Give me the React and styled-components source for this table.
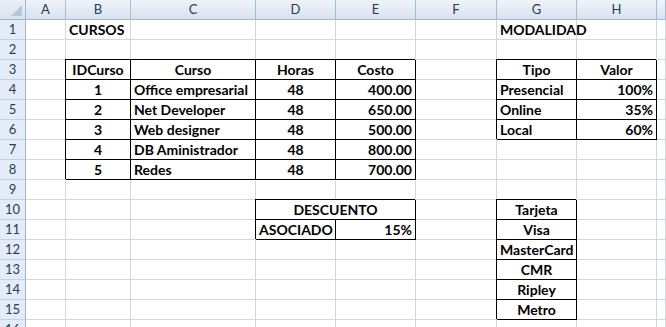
import React from "react";
import styled, { createGlobalStyle, css } from "styled-components";

const GlobalStyle = createGlobalStyle`
  html, body {
    margin: 0;
    padding: 0;
    background: #ffffff;
    overflow: hidden;
  }
  body {
    font-family: Lato, "Liberation Sans", sans-serif;
  }
`;

// column letters and widths (first entry is the row-number gutter)
const COLUMNS = ["A", "B", "C", "D", "E", "F", "G", "H", ""];
const WIDTHS = [26, 40, 65, 125, 80, 80, 81, 80, 80];
const ROW_COUNT = 16;

// sheet contents: key is the cell address
const CELLS = {
    B1: { v: "CURSOS" },
    G1: { v: "MODALIDAD" },

    B3: { v: "IDCurso", align: "center", box: true },
    C3: { v: "Curso", align: "center", box: true },
    D3: { v: "Horas", align: "center", box: true },
    E3: { v: "Costo", align: "center", box: true },
    G3: { v: "Tipo", align: "center", box: true },
    H3: { v: "Valor", align: "center", box: true },

    B4: { v: "1", align: "center", box: true },
    C4: { v: "Office empresarial", box: true },
    D4: { v: "48", align: "center", box: true },
    E4: { v: "400.00", align: "right", box: true },
    G4: { v: "Presencial", box: true },
    H4: { v: "100%", align: "right", box: true },

    B5: { v: "2", align: "center", box: true },
    C5: { v: "Net Developer", box: true },
    D5: { v: "48", align: "center", box: true },
    E5: { v: "650.00", align: "right", box: true },
    G5: { v: "Online", box: true },
    H5: { v: "35%", align: "right", box: true },

    B6: { v: "3", align: "center", box: true },
    C6: { v: "Web designer", box: true },
    D6: { v: "48", align: "center", box: true },
    E6: { v: "500.00", align: "right", box: true },
    G6: { v: "Local", box: true },
    H6: { v: "60%", align: "right", box: true },

    B7: { v: "4", align: "center", box: true },
    C7: { v: "DB Aministrador", box: true },
    D7: { v: "48", align: "center", box: true },
    E7: { v: "800.00", align: "right", box: true },

    B8: { v: "5", align: "center", box: true },
    C8: { v: "Redes", box: true },
    D8: { v: "48", align: "center", box: true },
    E8: { v: "700.00", align: "right", box: true },

    D10: { v: "DESCUENTO", align: "center", box: true, span: 2 },
    G10: { v: "Tarjeta", align: "center", box: true },

    D11: { v: "ASOCIADO", box: true },
    E11: { v: "15%", align: "right", box: true },
    G11: { v: "Visa", align: "center", box: true },

    G12: { v: "MasterCard", align: "center", box: true },
    G13: { v: "CMR", align: "center", box: true },
    G14: { v: "Ripley", align: "center", box: true },
    G15: { v: "Metro", align: "center", box: true },
};

const Sheet = styled.div`
    width: 666px;
    height: 327px;
    overflow: hidden;
    display: grid;
    grid-template-columns: ${WIDTHS.map((w) => `${w}px`).join(" ")} 1fr;
    grid-auto-rows: 20px;
    background: #ffffff;
`;

const headerText = css`
    font-family: Lato, "Liberation Sans", sans-serif;
    font-size: 13px;
    color: #283c55;
    line-height: 19px;
    text-align: center;
    box-sizing: border-box;
`;

const Corner = styled.div`
    position: relative;
    box-sizing: border-box;
    background: linear-gradient(#e9eff8, #d9e3f0);
    border-right: 1px solid #9eb6ce;
    border-bottom: 1px solid #9eb6ce;

    &::after {
        content: "";
        position: absolute;
        right: 3px;
        bottom: 3px;
        width: 0;
        height: 0;
        border-left: 11px solid transparent;
        border-bottom: 11px solid #b6c7dc;
    }
`;

const ColHead = styled.div`
    ${headerText};
    background: linear-gradient(#eef3fa, #d8e2ef);
    border-right: 1px solid #a9bdd4;
    border-bottom: 1px solid #9eb6ce;
`;

const RowHead = styled.div`
    ${headerText};
    background: #e4ecf7;
    border-right: 1px solid #9eb6ce;
    border-bottom: 1px solid #c3d1e4;
`;

const Cell = styled.div`
    box-sizing: border-box;
    padding: 0 3px;
    font-family: Lato, "Liberation Sans", sans-serif;
    font-weight: 700;
    font-size: 14px;
    line-height: 19px;
    color: #000000;
    white-space: nowrap;
    overflow: visible;
    text-align: ${(p) => p.$align || "left"};
    border-right: 1px solid #d0d7e5;
    border-bottom: 1px solid #d0d7e5;
    grid-column: span ${(p) => p.$span || 1};

    ${(p) =>
        p.$box &&
        css`
            border-right-color: #000000;
            border-bottom-color: #000000;
            box-shadow: -1px -1px 0 #000000;
        `}
`;

function SheetRow({ row }) {
    const out = [<RowHead key="h">{row}</RowHead>];
    let skip = 0;
    COLUMNS.forEach((col, i) => {
        if (skip > 0) {
            skip -= 1;
            return;
        }
        const data = col ? CELLS[`${col}${row}`] : null;
        if (data && data.span) skip = data.span - 1;
        out.push(
            <Cell
                key={i}
                $align={data?.align}
                $box={data?.box}
                $span={data?.span}
            >
                {data?.v}
            </Cell>
        );
    });
    return out;
}

function App() {
    const rows = Array.from({ length: ROW_COUNT }, (_, i) => i + 1);

    return (
        <>
            <GlobalStyle />
            <Sheet>
                <Corner />
                {COLUMNS.map((c, i) => (
                    <ColHead key={i}>{c}</ColHead>
                ))}
                {rows.map((r) => (
                    <SheetRow key={r} row={r} />
                ))}
            </Sheet>
        </>
    );
}

export default App;
